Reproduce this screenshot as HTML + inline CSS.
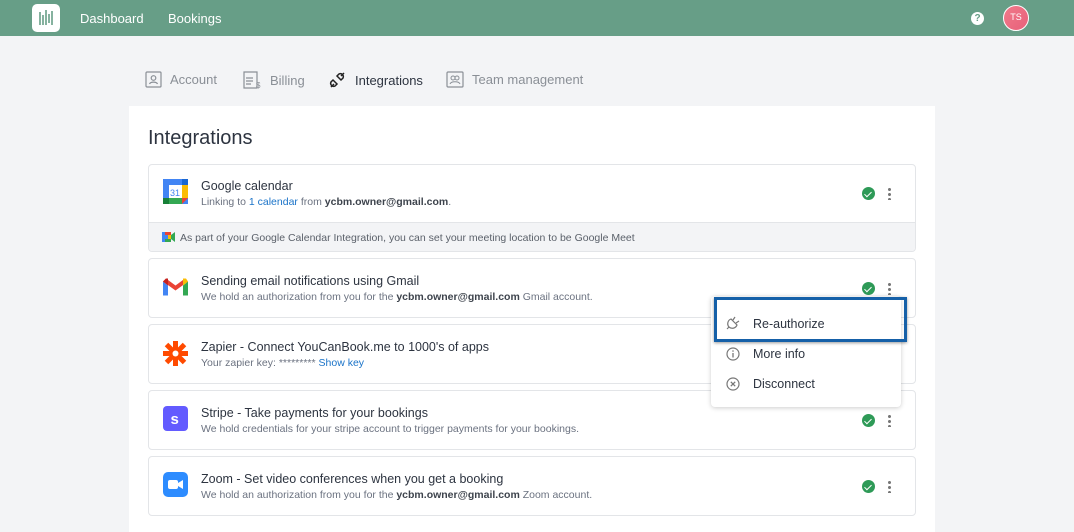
<!DOCTYPE html>
<html style="width:1074px;height:532px;overflow:hidden"><head><style>
*{box-sizing:border-box;margin:0;padding:0}
body{width:1074px;height:532px;overflow:hidden;background:#f3f4f6;font-family:"Liberation Sans",Arial,sans-serif;color:#2d3440;position:relative}
.top{position:absolute;left:0;top:0;width:1074px;height:36px;background:#679e87}
.logo{position:absolute;left:32px;top:4px;width:28px;height:28px;background:#fff;border-radius:5px}
.nav{position:absolute;top:11px;color:#fff;font-size:13px}
.help{position:absolute;left:971px;top:12px;width:13px;height:13px;border-radius:50%;background:#fff;color:#679e87;font-size:10px;font-weight:bold;text-align:center;line-height:13px}
.av{position:absolute;left:1003px;top:5px;width:26px;height:26px;border-radius:50%;background:linear-gradient(135deg,#f07a8a,#e8607a);border:1.5px solid #fff;color:#fff;font-size:9px;text-align:center;line-height:23px}
.tab{position:absolute;top:71px;font-size:13px;color:#8a8f96;display:flex;align-items:center;gap:8px}
.panel{position:absolute;left:129px;top:106px;width:806px;height:426px;background:#fff}
h1{position:absolute;left:148px;top:127px;font-size:20px;font-weight:normal;color:#2d3440}
.card{position:absolute;left:148px;width:768px;border:1px solid #e3e5e8;border-radius:4px;background:#fff;overflow:hidden}
.ic{position:absolute;left:14px;width:25px;height:25px}
.t{position:absolute;left:52px;font-size:12.5px;color:#2d3440}
.s{position:absolute;left:52px;font-size:10.5px;color:#6b7280}
.s b{color:#3d434c;font-weight:bold}
.s a{color:#1a73c8}
.ok{position:absolute;left:713px;width:13px;height:13px;border-radius:50%;background:#2e9a57}
.ok:after{content:"";position:absolute;left:4px;top:2.5px;width:3px;height:6px;border:solid #fff;border-width:0 1.8px 1.8px 0;transform:rotate(45deg)}
.dots{position:absolute;left:739px;width:3px;height:13px;background:radial-gradient(circle,#777 1.4px,transparent 1.6px) 0 0/3px 5px repeat-y}
.menu{position:absolute;left:711px;top:296px;width:190px;height:111px;background:#fff;border-radius:4px;box-shadow:0 1px 5px rgba(0,0,0,.2)}
.mi{position:absolute;left:42px;font-size:12.5px;color:#2d3440}
.hl{position:absolute;left:714px;top:297px;width:193px;height:45px;border:3px solid #1560a8;box-shadow:0 1px 3px rgba(0,0,0,.4)}
</style></head><body>
<div class="top">
<div class="logo"><svg width="28" height="28"><g stroke="#679e87" stroke-width="1.6"><line x1="8" y1="8" x2="8" y2="21"/><line x1="11" y1="11" x2="11" y2="21"/><line x1="14" y1="6" x2="14" y2="21"/><line x1="17" y1="10" x2="17" y2="19"/><line x1="20" y1="7" x2="20" y2="21"/></g></svg></div>
<div class="nav" style="left:80px">Dashboard</div>
<div class="nav" style="left:168px">Bookings</div>
<div class="help">?</div>
<div class="av">TS</div>
</div>
<div class="tab" style="left:145px"><svg width="17" height="17"><rect x="1" y="1" width="15" height="15" rx="1" fill="none" stroke="#8a8f96" stroke-width="1.2"/><circle cx="8.5" cy="7" r="2.3" fill="none" stroke="#8a8f96" stroke-width="1.2"/><path d="M4.5 13c1-2.5 7-2.5 8 0" fill="none" stroke="#8a8f96" stroke-width="1.2"/></svg>Account</div>
<div class="tab" style="left:243px"><svg width="19" height="18"><path d="M1 1h13v16H1z M3 7h7 M3 10h7 M3 13h5" fill="none" stroke="#8a8f96" stroke-width="1.2"/><text x="13" y="17" font-size="8" fill="#8a8f96">$</text></svg>Billing</div>
<div class="tab" style="left:328px;color:#2d3440"><svg width="19" height="18"><path d="M3 16l3-3M5 9l4 4-2 2a3 3 0 0 1-4-4zM16 2l-3 3M13 9L9 5l2-2a3 3 0 0 1 4 4z" fill="none" stroke="#222" stroke-width="1.5"/></svg>Integrations</div>
<div class="tab" style="left:446px"><svg width="18" height="17"><rect x="1" y="1" width="16" height="15" rx="1" fill="none" stroke="#8a8f96" stroke-width="1.2"/><circle cx="7" cy="7" r="2" fill="none" stroke="#8a8f96"/><circle cx="11" cy="7" r="2" fill="none" stroke="#8a8f96"/><path d="M4 13c1-3 9-3 10 0" fill="none" stroke="#8a8f96"/></svg>Team management</div>
<div class="panel"></div>
<h1>Integrations</h1>

<div class="card" style="top:164px;height:88px">
<svg class="ic" style="top:14px" viewBox="0 0 25 25"><rect width="25" height="25" fill="#4285f4"/><rect x="6" y="6" width="13" height="13" fill="#fff"/><rect x="19" y="0" width="6" height="19" fill="#fbbc04"/><rect x="0" y="19" width="19" height="6" fill="#34a853"/><rect x="0" y="19" width="6" height="6" fill="#188038"/><path d="M19 19h6l-6 6z" fill="#ea4335"/><rect x="19" y="0" width="6" height="6" fill="#1967d2"/><text x="7" y="17" font-size="9" fill="#4285f4">31</text></svg>
<div class="t" style="top:14px">Google calendar</div>
<div class="s" style="top:31px">Linking to <a>1 calendar</a> from <b>ycbm.owner@gmail.com</b>.</div>
<div class="ok" style="top:22px"></div><div class="dots" style="top:22px"></div>
<div style="position:absolute;left:0;top:57px;width:768px;height:31px;background:#f3f4f6;border-top:1px solid #e3e5e8"></div>
<svg style="position:absolute;left:13px;top:67px" width="13" height="10"><rect width="9" height="10" fill="#4285f4"/><rect x="3" y="0" width="6" height="3" fill="#ea4335"/><rect x="3" y="7" width="6" height="3" fill="#34a853"/><rect x="6" y="3" width="3" height="4" fill="#fbbc04"/><path d="M9 3l4-3v10l-4-3z" fill="#34a853"/></svg>
<div class="s" style="top:67px;left:31px;color:#5b616a">As part of your Google Calendar Integration, you can set your meeting location to be Google Meet</div>
</div>

<div class="card" style="top:258px;height:60px">
<svg class="ic" style="top:16px" viewBox="0 0 25 20"><path d="M0 4v14h5V8z" fill="#4285f4"/><path d="M20 8v10h5V4z" fill="#34a853"/><path d="M0 4l12.5 9L25 4l-3-3-9.5 7L3 1z" fill="#ea4335"/><path d="M0 4l5 4V1L3 1z" fill="#c5221f"/><path d="M20 1v7l5-4-2-3z" fill="#fbbc04"/></svg>
<div class="t" style="top:15px">Sending email notifications using Gmail</div>
<div class="s" style="top:32px">We hold an authorization from you for the <b>ycbm.owner@gmail.com</b> Gmail account.</div>
<div class="ok" style="top:23px"></div><div class="dots" style="top:23px"></div>
</div>

<div class="card" style="top:324px;height:60px">
<svg class="ic" style="top:16px" viewBox="0 0 25 25"><g stroke="#ff4a00" stroke-width="5"><line x1="12.5" y1="0" x2="12.5" y2="25"/><line x1="0" y1="12.5" x2="25" y2="12.5"/><line x1="3.5" y1="3.5" x2="21.5" y2="21.5"/><line x1="21.5" y1="3.5" x2="3.5" y2="21.5"/></g><circle cx="12.5" cy="12.5" r="3" fill="#fff"/></svg>
<div class="t" style="top:15px">Zapier - Connect YouCanBook.me to 1000's of apps</div>
<div class="s" style="top:32px">Your zapier key: ********* <a>Show key</a></div>
</div>

<div class="card" style="top:390px;height:60px">
<svg class="ic" style="top:15px" viewBox="0 0 25 25"><rect width="25" height="25" rx="4" fill="#635bff"/><text x="7.5" y="18" font-size="15" font-weight="bold" fill="#fff" font-family="Liberation Sans">s</text></svg>
<div class="t" style="top:15px">Stripe - Take payments for your bookings</div>
<div class="s" style="top:32px">We hold credentials for your stripe account to trigger payments for your bookings.</div>
<div class="ok" style="top:23px"></div><div class="dots" style="top:23px"></div>
</div>

<div class="card" style="top:456px;height:60px">
<svg class="ic" style="top:15px" viewBox="0 0 25 25"><rect width="25" height="25" rx="5" fill="#2d8cff"/><rect x="5" y="8" width="10" height="9" rx="2" fill="#fff"/><path d="M15 11l5-3v9l-5-3z" fill="#fff"/></svg>
<div class="t" style="top:15px">Zoom - Set video conferences when you get a booking</div>
<div class="s" style="top:32px">We hold an authorization from you for the <b>ycbm.owner@gmail.com</b> Zoom account.</div>
<div class="ok" style="top:23px"></div><div class="dots" style="top:23px"></div>
</div>

<div class="menu">
<svg style="position:absolute;left:15px;top:20px" width="14" height="14"><path d="M3 11a5 5 0 0 1 2-8l6 6a5 5 0 0 1-8 2zM1 13l2-2M9 1l-2 3M13 5l-3 2" fill="none" stroke="#777" stroke-width="1.2"/></svg>
<div class="mi" style="top:21px">Re-authorize</div>
<svg style="position:absolute;left:15px;top:51px" width="14" height="14"><circle cx="7" cy="7" r="6" fill="none" stroke="#777" stroke-width="1.2"/><line x1="7" y1="6" x2="7" y2="10.5" stroke="#777" stroke-width="1.3"/><circle cx="7" cy="4" r=".8" fill="#777"/></svg>
<div class="mi" style="top:51px">More info</div>
<svg style="position:absolute;left:15px;top:81px" width="14" height="14"><circle cx="7" cy="7" r="6" fill="none" stroke="#777" stroke-width="1.2"/><path d="M4.8 4.8l4.4 4.4M9.2 4.8l-4.4 4.4" stroke="#777" stroke-width="1.3"/></svg>
<div class="mi" style="top:81px">Disconnect</div>
</div>
<div class="hl"></div>
</body></html>
